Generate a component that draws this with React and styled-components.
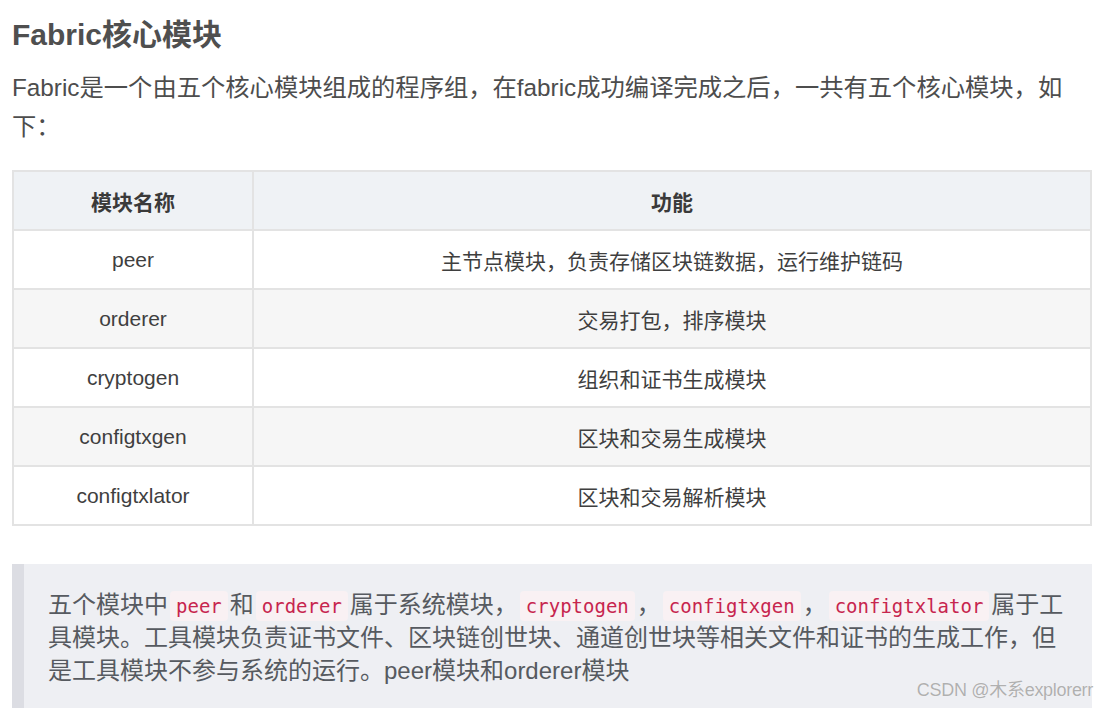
import styled, { createGlobalStyle } from "styled-components";

const GlobalStyle = createGlobalStyle`
  html, body {
    margin: 0;
    padding: 0;
    background: #fff;
    overflow: hidden;
  }
`;

const rows = [
  ["peer", "主节点模块，负责存储区块链数据，运行维护链码"],
  ["orderer", "交易打包，排序模块"],
  ["cryptogen", "组织和证书生成模块"],
  ["configtxgen", "区块和交易生成模块"],
  ["configtxlator", "区块和交易解析模块"],
];

export default function App() {
  return (
    <Page>
      <GlobalStyle />
      <Title>Fabric核心模块</Title>
      <Intro>
        Fabric是一个由五个核心模块组成的程序组，在fabric成功编译完成之后，一共有五个核心模块，如下：
      </Intro>

      <Table>
        <thead>
          <tr>
            <Th $narrow>模块名称</Th>
            <Th>功能</Th>
          </tr>
        </thead>
        <tbody>
          {rows.map(([name, desc], i) => (
            <Row key={name} $striped={i % 2 === 1}>
              <Td>{name}</Td>
              <Td>{desc}</Td>
            </Row>
          ))}
        </tbody>
      </Table>

      <Quote>
        五个模块中<Code>peer</Code>和<Code>orderer</Code>属于系统模块，<Code>cryptogen</Code>，<Code>configtxgen</Code>，<Code>configtxlator</Code>属于工具模块。工具模块负责证书文件、区块链创世块、通道创世块等相关文件和证书的生成工作，但是工具模块不参与系统的运行。peer模块和orderer模块
      </Quote>

      <Watermark>CSDN @木系explorerr</Watermark>
    </Page>
  );
}

const Page = styled.div`
  position: relative;
  height: 708px;
  overflow: hidden;
  padding: 0 15px 0 12px;
  font-family: "Liberation Sans", "Noto Sans CJK SC", sans-serif;
  color: #4d4d4d;
`;

const Title = styled.h2`
  margin: 0;
  padding-top: 14px;
  font-size: 30px;
  line-height: 42px;
  font-weight: 700;
  color: #4f4f4f;
`;

const Intro = styled.p`
  margin: 12px 0 0;
  font-size: 24.3px;
  line-height: 39px;
  color: #4d4d4d;
`;

const Table = styled.table`
  margin-top: 24px;
  width: 1080px;
  border-collapse: collapse;
  font-size: 21px;
  color: #3f3f3f;
`;

const Th = styled.th`
  width: ${(p) => (p.$narrow ? "238px" : "auto")};
  height: 57px;
  padding: 0;
  background: #eff2f5;
  border: 2px solid #e3e3e3;
  font-weight: 700;
  color: #3a3a3a;
  text-align: center;
`;

const Row = styled.tr`
  background: ${(p) => (p.$striped ? "#f6f6f6" : "#ffffff")};
`;

const Td = styled.td`
  height: 57px;
  padding: 0;
  border: 2px solid #e3e3e3;
  text-align: center;
`;

const Quote = styled.blockquote`
  margin: 38px 0 0;
  padding: 24px 22px 30px 24px;
  background: #eeeff3;
  border-left: 12px solid #dcdde3;
  font-size: 24px;
  line-height: 33px;
  color: #565a60;
`;

const Code = styled.code`
  display: inline-block;
  margin: 0 2px;
  padding: 4px 6px;
  line-height: 22px;
  border-radius: 4px;
  background: #f9f1f3;
  color: #c7254e;
  font-family: "DejaVu Sans Mono", "Liberation Mono", monospace;
  font-size: 19px;
`;

const Watermark = styled.div`
  position: absolute;
  right: 14px;
  bottom: 7px;
  font-size: 18px;
  color: #b0b0b0;
  text-shadow: 0 0 1px #fff;
  letter-spacing: -0.3px;
`;
